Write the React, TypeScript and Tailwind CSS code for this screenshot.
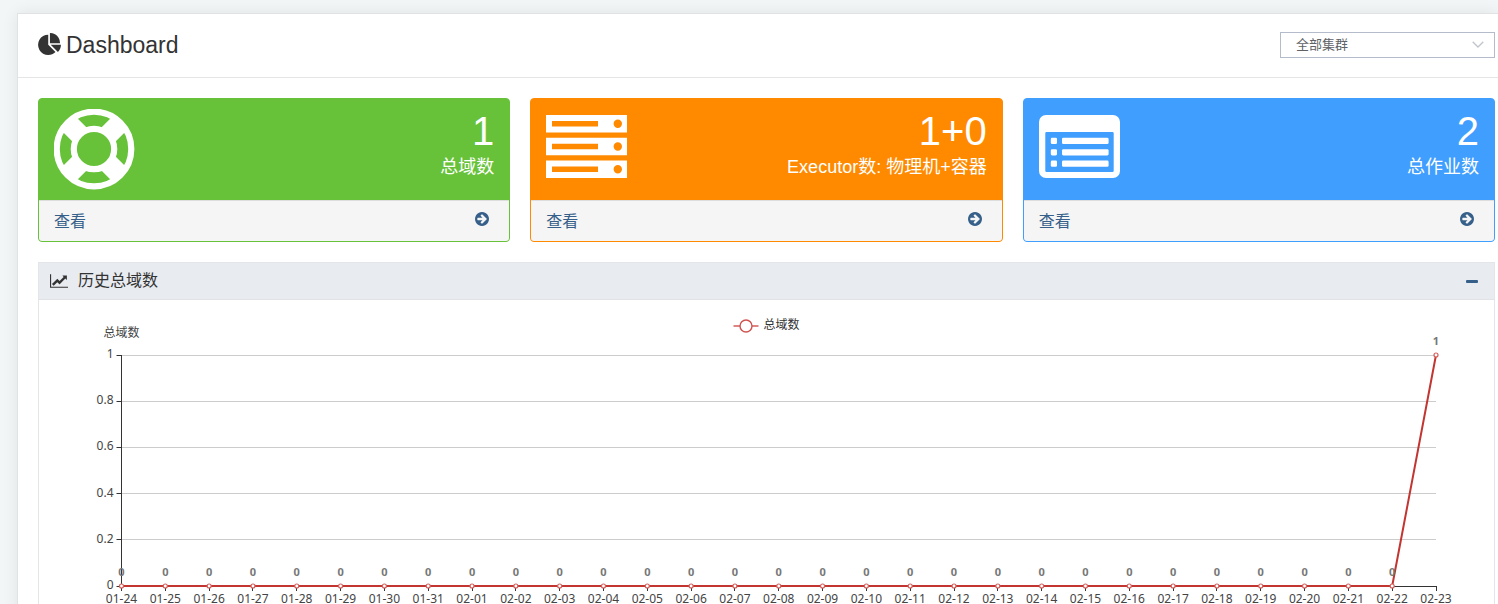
import { useLayoutEffect, useRef, useState, type ReactNode } from 'react';

interface StatCardProps {
  value: string;
  label: string;
  icon: ReactNode;
  tone: string;
}

const days = [
  '01-24', '01-25', '01-26', '01-27', '01-28', '01-29', '01-30', '01-31',
  '02-01', '02-02', '02-03', '02-04', '02-05', '02-06', '02-07', '02-08',
  '02-09', '02-10', '02-11', '02-12', '02-13', '02-14', '02-15', '02-16',
  '02-17', '02-18', '02-19', '02-20', '02-21', '02-22', '02-23',
];

const history = days.map((day) => ({ day, total: day === '02-23' ? 1 : 0 }));

const ticks = [0, 0.2, 0.4, 0.6, 0.8, 1];

function PieIcon() {
  return (
    <svg viewBox="0 0 1728 1664" className="w-[23px] h-[22px]" fill="currentColor" aria-hidden="true">
      <path d="M768 890l546 546q-106 108-247.500 168t-298.500 60q-209 0-385.500-103t-279.500-279.500-103-385.500 103-385.500 279.500-279.500 385.500-103v762zm187 6h773q0 157-60 298.500t-168 247.500zm709-128h-768v-768q209 0 385.500 103t279.500 279.500 103 385.500z" />
    </svg>
  );
}

function LifeRingIcon() {
  return (
    <svg viewBox="0 0 81 81" className="w-[81px] h-[81px]" fill="none" stroke="currentColor" aria-hidden="true">
      <circle cx="40" cy="40" r="37.3" strokeWidth="6.2" />
      <circle cx="40" cy="40" r="20.2" strokeWidth="6.2" />
      <path
        d="M15 15L25.500 25.500M54.500 54.500L65 65M65 15L54.500 25.500M25.500 54.500L15 65"
        strokeWidth="20"
      />
    </svg>
  );
}

function ServerIcon() {
  return (
    <svg viewBox="0 0 81 63" className="w-[81px] h-[63px] mt-1.5" fill="currentColor" fillRule="evenodd" aria-hidden="true">
      {[0, 22.7, 45.4].map((y) => (
        <path
          key={y}
          transform={`translate(0 ${y})`}
          d="M0 0H81V17.600H0ZM6 6V11.600H52V6ZM67.600 8.800a4.200 4.200 0 1 0 8.400 0a4.200 4.200 0 1 0 -8.400 0Z"
        />
      ))}
    </svg>
  );
}

function ListIcon() {
  return (
    <svg viewBox="0 0 81 63" className="w-[81px] h-[63px] mt-1.5" fill="currentColor" aria-hidden="true">
      <path
        fillRule="evenodd"
        d="M7 0H74A7 7 0 0 1 81 7V56A7 7 0 0 1 74 63H7A7 7 0 0 1 0 56V7A7 7 0 0 1 7 0ZM7.500 17A1.200 1.200 0 0 0 6.300 18.200V55.800A1.200 1.200 0 0 0 7.500 57H73.500A1.200 1.200 0 0 0 74.700 55.800V18.200A1.200 1.200 0 0 0 73.500 17Z"
      />
      {[22.8, 34.2, 45.6].map((y) => (
        <g key={y}>
          <rect x="11.8" y={y} width="6.2" height="6.2" rx="1.3" />
          <rect x="23" y={y} width="46.6" height="6.2" rx="1.3" />
        </g>
      ))}
    </svg>
  );
}

function ArrowCircleIcon() {
  return (
    <svg viewBox="128 128 1536 1536" className="w-3.5 h-3.5" fill="currentColor" aria-hidden="true">
      <path d="M1413 896q0-27-18-45l-91-91-362-362q-18-18-45-18t-45 18l-91 91q-18 18-18 45t18 45l189 189h-502q-26 0-45 19t-19 45v128q0 26 19 45t45 19h502l-189 189q-18 18-18 45t18 45l91 91q18 18 45 18t45-18l362-362 91-91q18-18 18-45zm251 0q0 209-103 385.500t-279.500 279.500-385.500 103-385.500-103-279.500-279.500-103-385.500 103-385.500 279.500-279.500 385.500-103 385.500 103 279.500 279.500 103 385.500z" />
    </svg>
  );
}

function LineChartIcon() {
  return (
    <svg viewBox="0 128 2048 1536" className="w-[18px] h-3.5" fill="currentColor" aria-hidden="true">
      <path d="M2048 1536v128h-2048v-1536h128v1408h1920zm-128-1248v435q0 21-19.500 29.500t-35.500-7.500l-121-121-633 633q-10 10-23 10t-23-10l-233-233-416 416-192-192 585-585q10-10 23-10t23 10l233 233 464-464-121-121q-16-16-7.500-35.500t29.500-19.500h435q14 0 23 9t9 23z" />
    </svg>
  );
}

function StatCard({ value, label, icon, tone }: StatCardProps) {
  return (
    <div className={`rounded border overflow-hidden ${tone}`}>
      <div className="flex justify-between px-[15px] pt-2.5 h-[101px] text-white">
        {icon}
        <div className="text-right">
          <div className="text-[40px] leading-[44px]">{value}</div>
          <div className="text-lg leading-7">{label}</div>
        </div>
      </div>
      <a
        href="#"
        className="flex justify-between items-center h-[41px] pl-[15px] pr-5 bg-[#f5f5f5] border-t border-[#ddd] text-base text-[#36608a]"
      >
        <span className="pt-0.5">查看</span>
        <span className="pb-1">
          <ArrowCircleIcon />
        </span>
      </a>
    </div>
  );
}

function HistoryChart() {
  const ref = useRef<HTMLDivElement>(null);
  const [width, setWidth] = useState(1455);

  useLayoutEffect(() => {
    const el = ref.current;
    if (!el) return;
    const update = () => setWidth(el.clientWidth);
    update();
    const observer = new ResizeObserver(update);
    observer.observe(el);
    return () => observer.disconnect();
  }, []);

  const left = 82.5;
  const right = width - 58;
  const top = 55;
  const bottom = 286;
  const px = (i: number) => left + (i * (right - left)) / (days.length - 1);
  const py = (v: number) => bottom - v * (bottom - top);
  const snap = (n: number) => Math.floor(n) + 0.5;
  const middle = width / 2;

  return (
    <div ref={ref} className="h-[320px]">
      <svg
        width={width}
        height="320"
        className="block text-xs font-['Noto_Sans','Noto_Sans_CJK_SC',sans-serif]"
        role="img"
        aria-label="历史总域数"
      >
        {ticks.map((t) => (
          <g key={t}>
            {t > 0 && <path d={`M${left} ${snap(py(t))}H${right}`} stroke="#ccc" />}
            <path d={`M${left - 5} ${snap(py(t))}H${left}`} stroke="#333" />
            <text x={left - 8} y={py(t) + 3} textAnchor="end" fill="#444">{t}</text>
          </g>
        ))}
        <path d={`M${left} ${top}V${bottom}M${left} ${bottom + 0.5}H${right}`} stroke="#333" />
        {history.map(({ day }, i) => (
          <g key={day}>
            <path d={`M${snap(px(i))} ${bottom}v5`} stroke="#333" />
            <text x={px(i)} y={bottom + 17} textAnchor="middle" fill="#444">{day}</text>
          </g>
        ))}
        <text x={left} y="37" textAnchor="middle" fill="#444">总域数</text>

        <polyline
          points={history.map((d, i) => `${px(i)},${py(d.total)}`).join(' ')}
          fill="none"
          stroke="#c23531"
          strokeWidth="2"
          strokeLinejoin="bevel"
        />
        {history.map((d, i) => (
          <g key={d.day}>
            <circle cx={px(i)} cy={py(d.total)} r="2" fill="#fff" stroke="#d4605c" strokeWidth="1.2" />
            <text x={px(i)} y={py(d.total) - 10} textAnchor="middle" fill="#777" className="text-[11px] font-bold">
              {d.total}
            </text>
          </g>
        ))}

        <g stroke="#d0514e" strokeWidth="1.4" fill="#fff">
          <path d={`M${middle - 33} 26h25`} />
          <circle cx={middle - 20.5} cy="26" r="6" />
        </g>
        <text x={middle - 3} y="29" fill="#333">总域数</text>
      </svg>
    </div>
  );
}

export default function App() {
  const [open, setOpen] = useState(true);

  return (
    <div className="h-screen overflow-hidden bg-[#f2f6f7] pl-[17px] pt-[13px] text-[#333] font-['Liberation_Sans','Noto_Sans_CJK_SC',sans-serif]">
      <main className="min-h-full bg-white border-l border-t border-[#e0e2e3] shadow-[0_0_15px_rgba(0,0,0,0.08)]">
        <header className="flex justify-between items-center h-16 pl-5 pr-[3px] pb-0.5 border-b border-[#e5e5e5]">
          <h1 className="flex items-center gap-[5px] text-[23px] leading-7">
            <span className="pb-0.5">
              <PieIcon />
            </span>
            Dashboard
          </h1>
          <div className="relative w-[215px]">
            <select
              aria-label="集群"
              className="appearance-none block w-full h-[26px] px-[15px] bg-white border border-[#b4bccc] text-[13px] text-[#606266]"
            >
              <option>全部集群</option>
            </select>
            <svg
              viewBox="0 0 12 7"
              className="absolute right-[11px] top-[9px] w-3 h-[7px] pointer-events-none"
              fill="none"
              stroke="#c0c4cc"
              strokeWidth="1.3"
              aria-hidden="true"
            >
              <path d="M0.700 0.700L6 6L11.300 0.700" />
            </svg>
          </div>
        </header>

        <div className="pl-5 pr-[3px] py-5">
          <div className="grid grid-cols-3 gap-5">
            <StatCard value="1" label="总域数" icon={<LifeRingIcon />} tone="bg-[#67c23a] border-[#67c23a]" />
            <StatCard
              value="1+0"
              label="Executor数: 物理机+容器"
              icon={<ServerIcon />}
              tone="bg-[#ff8a00] border-[#ff8a00]"
            />
            <StatCard value="2" label="总作业数" icon={<ListIcon />} tone="bg-[#409eff] border-[#409eff]" />
          </div>

          <section className="mt-5 border border-[#e3e5e8]">
            <div className="flex justify-between items-center h-[37px] pl-[11px] pr-4 bg-[#e8ebf0] border-b border-[#e0e2e5]">
              <h2 className="flex items-center gap-2.5 text-base">
                <LineChartIcon />
                历史总域数
              </h2>
              <button type="button" aria-label="折叠" aria-expanded={open} onClick={() => setOpen(!open)} className="py-2">
                <span className="block w-3 h-[3px] rounded-[1px] bg-[#36608a]" />
              </button>
            </div>
            {open && <HistoryChart />}
          </section>
        </div>
      </main>
    </div>
  );
}
